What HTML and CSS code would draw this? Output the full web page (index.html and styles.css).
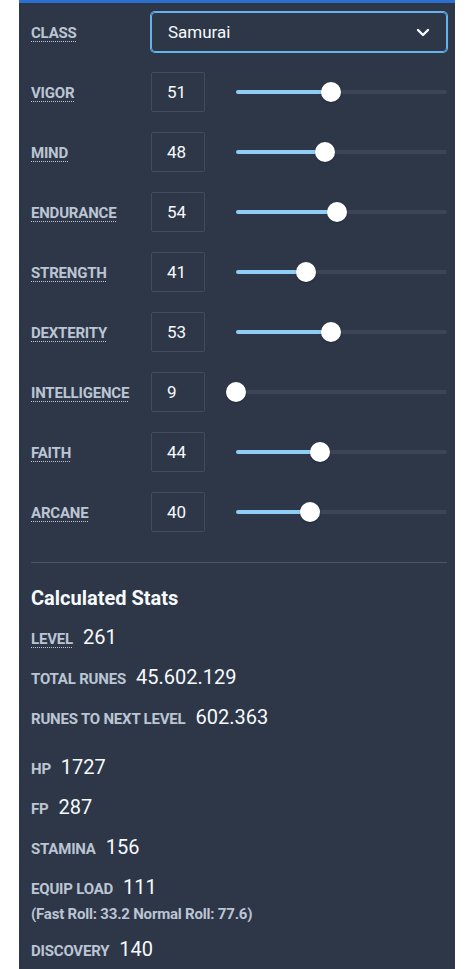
FILE: index.html
```html
<!DOCTYPE html>
<html>
<head>
<meta charset="utf-8">
<link rel="stylesheet" href="styles.css">
</head>
<body>
<div class="page">
  <div class="panel">
    <div class="attrs">
      <div class="row">
        <span class="lbl dotted">Class</span>
        <div class="select">
          <span>Samurai</span>
          <svg class="chev" width="14" height="9" viewBox="0 0 14 9"><path d="M2 2 L7 7 L12 2" fill="none" stroke="#f7fafc" stroke-width="2.4" stroke-linecap="round" stroke-linejoin="round"/></svg>
        </div>
      </div>
      <div class="row">
        <span class="lbl dotted">Vigor</span>
        <div class="num">51</div>
        <div class="slider"><div class="track"><div class="fill" style="width:44.8%"></div><div class="thumb" style="left:44.8%"></div></div></div>
      </div>
      <div class="row">
        <span class="lbl dotted">Mind</span>
        <div class="num">48</div>
        <div class="slider"><div class="track"><div class="fill" style="width:42%"></div><div class="thumb" style="left:42%"></div></div></div>
      </div>
      <div class="row">
        <span class="lbl dotted">Endurance</span>
        <div class="num">54</div>
        <div class="slider"><div class="track"><div class="fill" style="width:47.7%"></div><div class="thumb" style="left:47.7%"></div></div></div>
      </div>
      <div class="row">
        <span class="lbl dotted">Strength</span>
        <div class="num">41</div>
        <div class="slider"><div class="track"><div class="fill" style="width:33.3%"></div><div class="thumb" style="left:33.3%"></div></div></div>
      </div>
      <div class="row">
        <span class="lbl dotted">Dexterity</span>
        <div class="num">53</div>
        <div class="slider"><div class="track"><div class="fill" style="width:45.2%"></div><div class="thumb" style="left:45.2%"></div></div></div>
      </div>
      <div class="row">
        <span class="lbl dotted">Intelligence</span>
        <div class="num">9</div>
        <div class="slider"><div class="track"><div class="fill" style="width:0%"></div><div class="thumb" style="left:0%"></div></div></div>
      </div>
      <div class="row">
        <span class="lbl dotted">Faith</span>
        <div class="num">44</div>
        <div class="slider"><div class="track"><div class="fill" style="width:39.6%"></div><div class="thumb" style="left:39.6%"></div></div></div>
      </div>
      <div class="row">
        <span class="lbl dotted">Arcane</span>
        <div class="num">40</div>
        <div class="slider"><div class="track"><div class="fill" style="width:35.2%"></div><div class="thumb" style="left:35.2%"></div></div></div>
      </div>
    </div>

    <div class="divider"></div>

    <h2 class="heading">Calculated Stats</h2>

    <div class="stats">
      <div class="group">
        <div class="stat"><span class="lbl dotted">Level</span><span class="val">261</span></div>
        <div class="stat"><span class="lbl">Total Runes</span><span class="val">45.602.129</span></div>
        <div class="stat"><span class="lbl">Runes to next level</span><span class="val">602.363</span></div>
      </div>
      <div class="group">
        <div class="stat"><span class="lbl">HP</span><span class="val">1727</span></div>
        <div class="stat"><span class="lbl">FP</span><span class="val">287</span></div>
        <div class="stat"><span class="lbl">Stamina</span><span class="val">156</span></div>
        <div class="stat-multi">
          <div class="stat-line"><span class="lbl">Equip Load</span><span class="val">111</span></div>
          <div class="sub">(Fast Roll: 33.2 Normal Roll: 77.6)</div>
        </div>
        <div class="stat"><span class="lbl">Discovery</span><span class="val">140</span></div>
      </div>
    </div>
  </div>
</div>
</body>
</html>
```

FILE: styles.css
```css
* { box-sizing: border-box; }
html, body { margin: 0; padding: 0; background: #ffffff; }
body { font-family: Roboto, "Noto Sans", "Liberation Sans", sans-serif; }

.page {
  padding: 0 19px;
  height: 969px;
  overflow: hidden;
}

.panel {
  background: #2d3748;
  border-top: 3px solid #2b6fd1;
  min-height: 969px;
  padding: 9px 8px 0 12px;
  color: #f7fafc;
}

.attrs {
  display: flex;
  flex-direction: column;
  gap: 20px;
}

.row {
  display: grid;
  grid-template-columns: 120px 54px 1fr;
  align-items: center;
  height: 40px;
}

.lbl {
  font-size: 15px;
  font-weight: 700;
  color: #bcc5d3;
  text-transform: uppercase;
  white-space: nowrap;
  letter-spacing: -0.2px;
}

.row > .lbl { padding-top: 2px; }

.dotted {
  text-decoration: underline dotted;
  text-underline-offset: 3px;
  text-decoration-thickness: 1px;
}

.select {
  grid-column: 2 / 4;
  height: 40px;
  border: 1px solid #63b3ed;
  box-shadow: 0 0 0 1px #63b3ed;
  border-radius: 4px;
  display: flex;
  align-items: center;
  justify-content: space-between;
  padding: 0 16px 0 16px;
  font-size: 17px;
  color: #f7fafc;
}

.chev { display: block; }

.num {
  height: 40px;
  border: 1px solid #424c5e;
  border-radius: 2px;
  display: flex;
  align-items: center;
  padding-left: 15px;
  font-size: 17px;
  color: #f7fafc;
}

.slider {
  height: 40px;
  display: flex;
  align-items: center;
  margin-left: 31px;
}

.track {
  position: relative;
  width: 100%;
  height: 4px;
  border-radius: 2px;
  background: #3b4556;
}

.fill {
  height: 100%;
  border-radius: 2px;
  background: #90cdf4;
}

.thumb {
  position: absolute;
  top: 50%;
  width: 20px;
  height: 20px;
  margin: -10px 0 0 -10px;
  border-radius: 50%;
  background: #ffffff;
  box-shadow: 0 1px 2px rgba(0,0,0,0.25);
}

.divider {
  height: 1px;
  background: #4a5568;
  margin-top: 30px;
}

.heading {
  margin: 23px 0 0 0;
  font-size: 20px;
  line-height: 24px;
  font-weight: 700;
  color: #f7fafc;
}

.stats {
  margin-top: 7px;
  display: flex;
  flex-direction: column;
  gap: 10px;
}

.group { display: flex; flex-direction: column; }

.stat, .stat-line {
  display: flex;
  align-items: baseline;
  gap: 10px;
  line-height: 24px;
}

.stat { height: 40px; padding: 8px 0; }

.stat-multi { height: 62px; padding-top: 8px; }
.stat-line { height: 24px; }

.val {
  font-size: 20px;
  color: #f7fafc;
}

.sub {
  margin-top: 6px;
  font-size: 15px;
  line-height: 18px;
  font-weight: 700;
  color: #bcc5d3;
  letter-spacing: -0.2px;
}
```
